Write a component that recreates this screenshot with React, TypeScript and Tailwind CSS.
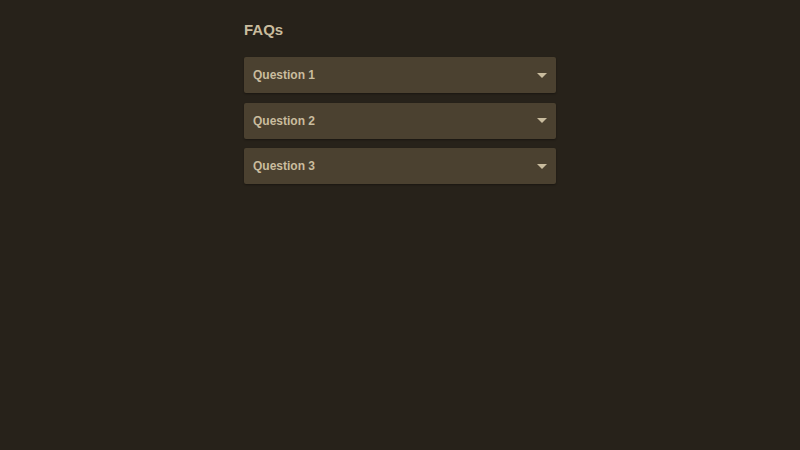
const questions = ["Question 1", "Question 2", "Question 3"];

function Caret() {
  return (
    <svg width="10" height="5" viewBox="0 0 10 5" className="shrink-0">
      <path d="M0 0 L10 0 L5 5 Z" fill="#c9bc9e" />
    </svg>
  );
}

export default function App() {
  return (
    <div className="min-h-[450px] w-full bg-[#27221a] font-['Liberation_Sans',Arial,sans-serif]">
      <div className="mx-auto w-[312px] pt-[20px]">
        <h2 className="mb-[17px] text-[15px] font-bold leading-[20px] text-[#c9bc9e]">FAQs</h2>
        <div className="flex flex-col gap-[9.5px]">
          {questions.map((q) => (
            <button
              key={q}
              className="flex h-[36px] w-full items-center justify-between rounded-[2px] bg-[#4b4130] pl-[9px] pr-[9px] shadow-[0_1px_2px_rgba(0,0,0,0.35)]"
            >
              <span className="text-[12px] font-bold text-[#c9bc9e]">{q}</span>
              <Caret />
            </button>
          ))}
        </div>
      </div>
    </div>
  );
}
